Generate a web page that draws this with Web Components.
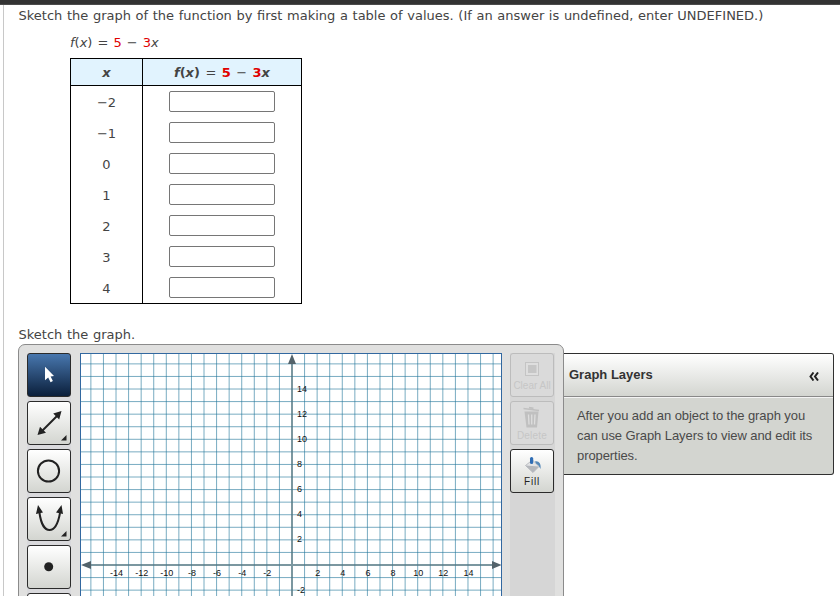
<!DOCTYPE html>
<html lang="en">
  <head>
    <meta charset="UTF-8" />
    <meta name="viewport" content="width=device-width, initial-scale=1.0" />
    <title>Sketch the graph</title>
    <style>
      html,
      body {
        margin: 0;
        height: 596px;
        overflow: hidden;
        background: #fff;
      }
    </style>
  </head>
  <body>
    <question-page>
      <math-text slot="formula"></math-text>
      <value-table slot="table" values="−2,−1,0,1,2,3,4"></value-table>
      <graph-tool slot="graph"></graph-tool>
      <graph-layers slot="graph" heading="Graph Layers">
        After you add an object to the graph you can use Graph Layers to view
        and edit its properties.
      </graph-layers>
    </question-page>

    <script>
      class QuestionPage extends HTMLElement {
        constructor() {
          super();
          this.attachShadow({ mode: "open" });
          this.shadowRoot.innerHTML = `
            <style>
              :host {
                display: block;
                height: 596px;
                overflow: hidden;
                font: 13px/18px Verdana, "DejaVu Sans", sans-serif;
                color: #444;
              }
              .bar {
                height: 4px;
                background: #333;
                border-bottom: 1px solid #4b4b4b;
              }
              .content {
                margin-left: 3px;
                border-left: 1px solid #c8c8c8;
                padding: 2px 0 0 14.500px;
                height: 589px;
              }
              p { margin: 0; white-space: nowrap; word-spacing: 0.5px; }
              .indent { padding: 9px 0 0 51.500px; }
              .table { padding: 6px 0 0 51.500px; }
              .second { padding-top: 22px; }
              .graph { display: flex; align-items: flex-start; margin-left: -0.5px; }
            </style>
            <div class="bar"></div>
            <div class="content">
              <p>Sketch the graph of the function by first making a table of values. (If an answer is undefined, enter UNDEFINED.)</p>
              <div class="indent"><slot name="formula"></slot></div>
              <div class="table"><slot name="table"></slot></div>
              <p class="second">Sketch the graph.</p>
              <div class="graph"><slot name="graph"></slot></div>
            </div>
          `;
        }
      }

      class MathText extends HTMLElement {
        constructor() {
          super();
          this.attachShadow({ mode: "open" });
          this.shadowRoot.innerHTML = `
            <style>
              :host { display: block; white-space: nowrap; word-spacing: 0.9px; }
              b { font-weight: inherit; color: #e00000; }
              span { font-weight: normal; }
            </style>
            <i>f</i>(<i>x</i>) <span>=</span> <b>5</b> <span>−</span> <b>3</b><i>x</i>
          `;
        }
      }

      class ValueTable extends HTMLElement {
        constructor() {
          super();
          this.attachShadow({ mode: "open" });
          const rows = this.getAttribute("values")
            .split(",")
            .map((v) => `<div class="x">${v}</div><div class="y"><input type="text" /></div>`)
            .join("");
          this.shadowRoot.innerHTML = `
            <style>
              :host {
                display: grid;
                grid-template-columns: 72px 160px;
                grid-template-rows: 27px;
                grid-auto-rows: 31px;
                box-sizing: border-box;
                width: 232px;
                border: 1px solid #000;
                border-width: 1px 0 1px 0;
              }
              div {
                display: flex;
                align-items: center;
                justify-content: center;
                box-sizing: border-box;
                border-left: 1px solid #000;
              }
              .y { border-right: 1px solid #000; }
              .x { padding-top: 2px; }
              .head {
                background: #e1f3fe;
                border-bottom: 1px solid #000;
                font-weight: bold;
                padding-top: 1px;
              }
              input {
                box-sizing: border-box;
                width: 106px;
                height: 21px;
                margin: 0;
                border: 1px solid #767676;
                border-radius: 2px;
                background: #fff;
              }
            </style>
            <div class="head"><i>x</i></div>
            <div class="head y"><math-text></math-text></div>
            ${rows}
          `;
        }
      }

      const icons = {
        pointer: `<path d="M17 12.800v13.400l3.200-2.700 2.400 4.700 2.300-1.200-2.300-4.400 3.400-.6z" fill="#fff"/>`,
        line: `<path d="M14 29 29 14" stroke="#222" stroke-width="2"/>
          <path d="M9.500 33 12 24.800l6 6zM33.500 9 25.200 11.500l6 6z" fill="#222"/>`,
        circle: `<circle cx="20.500" cy="21" r="10.600" fill="none" stroke="#222" stroke-width="2"/>`,
        parabola: `<path d="M11.500 15C13 26 17 32 21.500 32S30 26 32 15" fill="none" stroke="#222" stroke-width="2"/>
          <path d="M10 7 8 16l7-1.500zM33.500 7 28 14.500l7 1.500z" fill="#222"/>`,
        point: `<circle cx="20.700" cy="20.700" r="4.500" fill="#222"/>`,
        clear: `<rect x="14.500" y="8.500" width="13" height="13" fill="#dedede" stroke="#c4c4c4"/>
          <rect x="17" y="11" width="8.500" height="8" fill="#c6c6c6"/>`,
        delete: `<path d="m12.500 6.500 15.500 2M18 5.500l4.500 .8" stroke="#c0c0c0" stroke-width="1.600"/>
          <path d="M13.500 9.500h14L26 25.500H15.500z" fill="#c0c0c0"/>
          <path d="m17.500 12.500 .5 10M20.700 12.500v10M24 12.500l-.5 10" stroke="#dedede" stroke-width="1.300"/>`,
        fill: `<path d="m14.500 15.500 7-5.500 6.500 6.500-6 6z" fill="#e3e4e6" stroke="#b0b3b7" stroke-width=".8"/>
          <path d="m14.500 15.500 13.500 1-6 6z" fill="#b4b7bc"/>
          <path d="M24 11.500c3.500-1 6.500 2 5.500 7.500l-2-3.500-2.500-2z" fill="#5688b8"/>
          <rect x="19" y="7" width="3.200" height="7" rx="1.500" fill="#2f6db5"/>`,
      };

      class ToolButton extends HTMLElement {
        constructor() {
          super();
          this.attachShadow({ mode: "open" });
          const corner = this.hasAttribute("menu")
            ? `<path d="M38.500 33v5.500H33z" fill="#222"/>`
            : "";
          this.shadowRoot.innerHTML = `
            <style>
              :host {
                display: grid;
                flex: none;
                box-sizing: border-box;
                width: 44px;
                height: 44px;
                border: 1px solid #2b2b2b;
                border-radius: 3px;
                background: linear-gradient(#fff, #d3d5d0);
                overflow: hidden;
              }
              :host([selected]) { background: linear-gradient(#4877ae, #0b1f3b); }
              :host([disabled]) {
                background: #dadada;
                border-color: #bcbcbc;
                color: #c6c6c6;
              }
              svg, span { grid-area: 1 / 1; }
              span {
                align-self: end;
                justify-self: center;
                font: 10px/12px "Liberation Sans", Arial, sans-serif;
                letter-spacing: 0.2px;
                white-space: nowrap;
                padding-bottom: 4px;
              }
              :host([icon="delete"]) span { padding-bottom: 2px; }
              :host([icon="fill"]) span { letter-spacing: 0.8px; color: #222; }
              :host([icon="clear"]) span { letter-spacing: 0; }
            </style>
            <svg width="42" height="42" viewBox="0 0 42 42">${icons[this.getAttribute("icon")] || ""}${corner}</svg>
            <span><slot></slot></span>
          `;
        }
      }

      class GraphGrid extends HTMLElement {
        constructor() {
          super();
          this.attachShadow({ mode: "open" });
          const step = 12.57;
          const cx = 211;
          const cy = 211;
          let lines = "";
          let labels = "";
          for (let i = -16; i <= 16; i++) {
            const x = cx + i * step;
            const y = cy - i * step;
            if (i !== 0) {
              lines += `<path d="M${x} 0V260M0 ${y}H420" />`;
            }
            if (i !== 0 && i % 2 === 0 && Math.abs(i) < 16) {
              labels += `<text x="${x + 0.5}" y="${cy + 11}" text-anchor="middle">${i}</text>`;
              if (i >= -2) {
                labels += `<text x="${cx + 5}" y="${y + 2.5}">${i}</text>`;
              }
            }
          }
          this.shadowRoot.innerHTML = `
            <style>
              :host {
                display: block;
                flex: none;
                border: 1px solid #3268a0;
                background: #fff;
                width: 420px;
                height: 260px;
                overflow: hidden;
              }
              svg { display: block; }
              .lines { stroke: #1f7499; stroke-opacity: .6; fill: none; }
              text { font: 9px "Liberation Sans", Arial, sans-serif; fill: #111; }
            </style>
            <svg width="420" height="260">
              <g class="lines">${lines}</g>
              <path d="M${cx} 8V260M8 ${cy}H412" stroke="#4f7480" stroke-opacity=".75" stroke-width="2" />
              <path d="M${cx} 0l4 10h-8zM0 ${cy}l10-4v8zM420.500 ${cy}l-9.500-4v8z" fill="#53636b" />
              ${labels}
            </svg>
          `;
        }
      }

      class GraphTool extends HTMLElement {
        constructor() {
          super();
          this.attachShadow({ mode: "open" });
          this.shadowRoot.innerHTML = `
            <style>
              :host {
                display: flex;
                flex: none;
                box-sizing: border-box;
                width: 546px;
                height: 270px;
                border: 1px solid #8b8b8b;
                border-radius: 7px 7px 0 0;
                background: #e0e0df;
                padding: 8px;
              }
              .tools {
                display: flex;
                flex-direction: column;
                gap: 4px;
                width: 44px;
                background: #d9d9dc;
              }
              graph-grid { margin: 0 8px 0 9px; }
              .actions { width: 45px; background: #d6d6d6; }
            </style>
            <div class="tools">
              <tool-button icon="pointer" selected></tool-button>
              <tool-button icon="line" menu></tool-button>
              <tool-button icon="circle"></tool-button>
              <tool-button icon="parabola" menu></tool-button>
              <tool-button icon="point"></tool-button>
              <tool-button></tool-button>
            </div>
            <graph-grid></graph-grid>
            <div class="tools actions">
              <tool-button icon="clear" disabled>Clear All</tool-button>
              <tool-button icon="delete" disabled>Delete</tool-button>
              <tool-button icon="fill">Fill</tool-button>
            </div>
          `;
        }
      }

      class GraphLayers extends HTMLElement {
        constructor() {
          super();
          this.attachShadow({ mode: "open" });
          this.shadowRoot.innerHTML = `
            <style>
              :host {
                display: block;
                flex: none;
                box-sizing: border-box;
                width: 270px;
                height: 122px;
                margin-top: 9px;
                border: 1px solid #303030;
                border-left: 0;
                border-radius: 0 3px 3px 0;
                background: #d3d5d0;
                font: 13px/20px "Liberation Sans", Arial, sans-serif;
                color: #4a4a4a;
                overflow: hidden;
              }
              header {
                display: flex;
                align-items: center;
                justify-content: space-between;
                box-sizing: border-box;
                height: 43px;
                padding: 0 14px 0 5px;
                background: linear-gradient(#fff, #d3d5d0);
                border-bottom: 1px solid #888;
                box-shadow: 0 1px #f4f4f4;
                font-weight: bold;
                color: #333;
              }
              p { margin: 0; padding: 9px 10px 0 13px; letter-spacing: -0.08px; }
              svg { margin-top: 3px; }
            </style>
            <header>
              <span>${this.getAttribute("heading")}</span>
              <svg width="10" height="9" fill="none" stroke="#222" stroke-width="2">
                <path d="M4.500 .5 1.500 4.500l3 4M9 .5l-3 4 3 4" />
              </svg>
            </header>
            <p><slot></slot></p>
          `;
        }
      }

      customElements.define("math-text", MathText);
      customElements.define("value-table", ValueTable);
      customElements.define("tool-button", ToolButton);
      customElements.define("graph-grid", GraphGrid);
      customElements.define("graph-tool", GraphTool);
      customElements.define("graph-layers", GraphLayers);
      customElements.define("question-page", QuestionPage);
    </script>
  </body>
</html>
